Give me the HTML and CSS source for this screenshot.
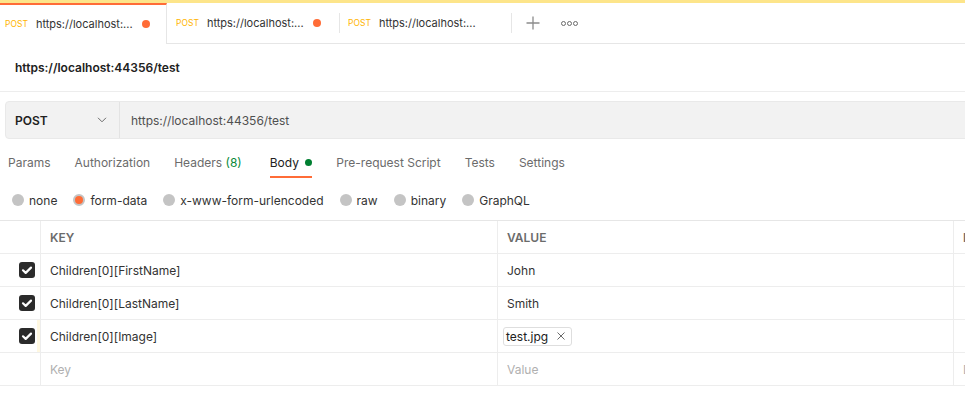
FILE: index.html
```html
<!DOCTYPE html>
<html lang="en">
<head>
  <meta charset="UTF-8">
  <meta name="viewport" content="width=device-width, initial-scale=1.0">
  <title>Postman</title>

  <link rel="stylesheet" href="styles.css">
</head>
<body>
  <div class="topline"></div>

  <div class="tabbar">
    <div class="tab active">
      <span class="method">POST</span>
      <span class="tab-url">https://localhost:...</span>
      <span class="dot"></span>
    </div>
    <div class="tab">
      <span class="method">POST</span>
      <span class="tab-url">https://localhost:...</span>
      <span class="dot"></span>
    </div>
    <div class="tab">
      <span class="method">POST</span>
      <span class="tab-url">https://localhost:...</span>
    </div>
    <div class="tab-actions">
      <svg width="14" height="14" viewBox="0 0 14 14">
        <path d="M7 0.5v13M0.5 7h13" stroke="#8c8c8c" stroke-width="1.3" fill="none"/>
      </svg>
      <span class="more"><i></i><i></i><i></i></span>
    </div>
  </div>

  <div class="title">https://localhost:44356/test</div>

  <div class="urlbar">
    <div class="method-select">
      <span>POST</span>
      <svg width="10" height="6" viewBox="0 0 10 6">
        <path d="M1 0.8l4 4 4-4" stroke="#6b6b6b" stroke-width="1" fill="none"/>
      </svg>
    </div>
    <div class="url-input">https://localhost:44356/test</div>
  </div>

  <div class="req-tabs">
    <span class="req-tab">Params</span>
    <span class="req-tab">Authorization</span>
    <span class="req-tab">Headers <span class="count">(8)</span></span>
    <span class="req-tab current">Body <span class="green-dot"></span></span>
    <span class="req-tab">Pre-request Script</span>
    <span class="req-tab">Tests</span>
    <span class="req-tab">Settings</span>
  </div>

  <div class="body-types">
    <label class="radio"><span class="circle"></span>none</label>
    <label class="radio"><span class="circle on"></span>form-data</label>
    <label class="radio"><span class="circle"></span>x-www-form-urlencoded</label>
    <label class="radio"><span class="circle"></span>raw</label>
    <label class="radio"><span class="circle"></span>binary</label>
    <label class="radio"><span class="circle"></span>GraphQL</label>
  </div>

  <div class="table">
    <div class="row head">
      <div class="cell check"></div>
      <div class="cell">KEY</div>
      <div class="cell">VALUE</div>
      <div class="cell">D</div>
    </div>
    <div class="row">
      <div class="cell check"><span class="box"></span></div>
      <div class="cell">Children[0][FirstName]</div>
      <div class="cell">John</div>
      <div class="cell"></div>
    </div>
    <div class="row">
      <div class="cell check"><span class="box"></span></div>
      <div class="cell">Children[0][LastName]</div>
      <div class="cell">Smith</div>
      <div class="cell"></div>
    </div>
    <div class="row">
      <div class="cell check hover"><span class="box"></span></div>
      <div class="cell">Children[0][Image]</div>
      <div class="cell file-cell">
        <span class="file">test.jpg
          <svg class="remove" width="8" height="8" viewBox="0 0 8 8">
            <path d="M0.5 0.5l7 7M7.5 0.5l-7 7" stroke="#6b6b6b" stroke-width="1" fill="none"/>
          </svg>
        </span>
      </div>
      <div class="cell"></div>
    </div>
    <div class="row empty">
      <div class="cell check"></div>
      <div class="cell">Key</div>
      <div class="cell">Value</div>
      <div class="cell">D</div>
    </div>
  </div>
</body>
</html>
```

FILE: styles.css
```css
body {
  margin: 0;
  font-family: Inter, "Noto Sans", sans-serif;
  color: #212121;
  background: #fff;
  overflow: hidden;
}

.topline {
  height: 3px;
  background: #fde58a;
}

.tabbar {
  display: flex;
  height: 40px;
  border-bottom: 1px solid #e6e6e6;
}

.tab {
  display: flex;
  align-items: center;
  width: 172px;
  box-sizing: border-box;
  padding-left: 9px;
  position: relative;
}

.tab + .tab::before {
  content: "";
  position: absolute;
  left: 0;
  top: 10px;
  bottom: 10px;
  border-left: 1px solid #e6e6e6;
}

.tab.active {
  width: 167px;
  padding-left: 5px;
  border-top: 2px solid #ff6c37;
  border-right: 1px solid #e6e6e6;
  height: 41px;
  background: #fff;
  padding-bottom: 2px;
}

.tab.active + .tab::before {
  display: none;
}

.tab-actions {
  display: flex;
  align-items: center;
  border-left: 1px solid #e6e6e6;
  margin: 10px 0;
  padding-left: 14px;
}

.method {
  font-size: 8.5px;
  color: #ffb400;
  margin-right: 8px;
}

.tab-url {
  font-size: 11px;
  color: #333;
}

.dot {
  width: 8px;
  height: 8px;
  border-radius: 50%;
  background: #ff6c37;
  margin-left: 9px;
}

.more {
  display: flex;
  gap: 1px;
  margin-left: 21px;
}

.more i {
  width: 3px;
  height: 3px;
  border: 1px solid #6b6b6b;
  border-radius: 50%;
}

.title {
  height: 47px;
  line-height: 47px;
  padding-left: 15px;
  font-size: 12px;
  font-weight: 600;
  border-bottom: 1px solid #ededed;
}

.urlbar {
  display: flex;
  margin: 9px -20px 0 5px;
  height: 38px;
  box-sizing: border-box;
  background: #f2f2f2;
  border: 1px solid #e9e9e9;
  border-radius: 4px;
}

.method-select {
  display: flex;
  align-items: center;
  justify-content: space-between;
  width: 114px;
  box-sizing: border-box;
  padding: 0 12px 0 9px;
  border-right: 1px solid #e3e3e3;
  font-size: 12px;
  font-weight: 600;
  color: #212121;
}

.url-input {
  display: flex;
  align-items: center;
  padding-left: 11px;
  font-size: 12px;
  color: #505050;
}

.req-tabs {
  display: flex;
  gap: 24px;
  padding: 16px 0 0 8px;
  height: 23px;
  font-size: 12px;
  color: #6b6b6b;
}

.req-tab {
  line-height: 16px;
}

.req-tab.current {
  color: #212121;
  border-bottom: 2px solid #ff6c37;
  height: 21px;
  margin-left: 4px;
}

.count {
  color: #0a8a3a;
}

.green-dot {
  display: inline-block;
  width: 7px;
  height: 7px;
  border-radius: 50%;
  background: #007f31;
  margin-left: 3px;
  vertical-align: 1px;
}

.body-types {
  display: flex;
  align-items: center;
  gap: 16px;
  height: 42px;
  padding: 2px 0 0 12px;
  box-sizing: border-box;
  font-size: 12px;
  color: #333;
}

.radio {
  display: flex;
  align-items: center;
}

.circle {
  width: 12px;
  height: 12px;
  border-radius: 50%;
  background: #c4c4c4;
  margin-right: 5px;
  box-sizing: border-box;
}

.circle.on {
  background: #ff6c37;
  border: 2px solid #c4c4c4;
}

.table {
  border-top: 1px solid #e6e6e6;
  width: 1100px;
}

.row {
  display: grid;
  grid-template-columns: 40px 457px 456px 1fr;
  height: 33px;
  border-bottom: 1px solid #ededed;
  box-sizing: border-box;
  font-size: 12px;
  color: #333;
}

.cell {
  display: flex;
  align-items: center;
  padding-left: 9px;
  border-left: 1px solid #ededed;
}

.cell.check {
  border-left: none;
  justify-content: flex-end;
  padding: 0 5px 0 0;
}

.cell.check.hover {
  box-shadow: inset -3px 0 0 #fff8e1;
}

.head {
  font-weight: 600;
  color: #6b6b6b;
}

.empty {
  color: #b0b0b0;
}

.box {
  width: 16px;
  height: 16px;
  border-radius: 3px;
  background: #2b2b2b url("data:image/svg+xml;utf8,<svg xmlns='http://www.w3.org/2000/svg' width='16' height='16'><path d='M4 8.3l2.7 2.6L12 5.6' stroke='white' stroke-width='2.2' stroke-linecap='round' stroke-linejoin='round' fill='none'/></svg>") no-repeat center;
}

.file-cell {
  padding-left: 5px;
}

.file {
  display: inline-flex;
  align-items: center;
  border: 1px solid #dedede;
  border-radius: 3px;
  padding: 1px 6px 1px 2px;
  color: #212121;
}

.remove {
  margin-left: 9px;
}
```
